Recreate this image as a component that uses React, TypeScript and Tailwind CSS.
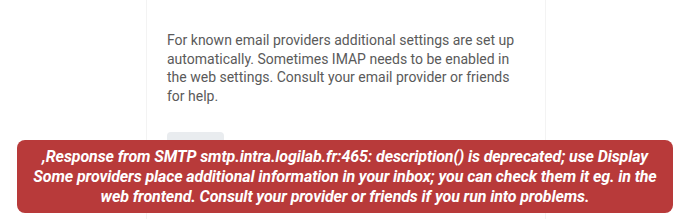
export default function App() {
  return (
    <div className="relative h-[219px] w-[691px] overflow-hidden bg-white" style={{ fontFamily: 'Roboto, "Liberation Sans", sans-serif' }}>
      <div className="ml-[146px] h-full w-[400px] border-x border-[#f3f3f3] px-5 pt-[31px]">
        <p className="text-[14px] leading-[18.5px] text-[#5a5a5a]">
          For known email providers additional settings are set up automatically. Sometimes IMAP needs to be enabled in the web settings. Consult your email provider or friends for help.
        </p>
        <div className="mt-[27px] h-9 w-[57px] rounded bg-[#e9ecef]" />
      </div>

      {/* error toast */}
      <div className="absolute left-[17px] top-[140px] flex h-[73px] w-[656px] items-center justify-center rounded-lg bg-[#b83a3a] px-1">
        <p className="text-center text-[16px] font-bold italic leading-[20px] tracking-[-0.1px] text-white">
          ,Response from SMTP smtp.intra.logilab.fr:465: description() is deprecated; use Display
          <br />
          Some providers place additional information in your inbox; you can check them it eg. in the web frontend. Consult your provider or friends if you run into problems.
        </p>
      </div>
    </div>
  )
}
